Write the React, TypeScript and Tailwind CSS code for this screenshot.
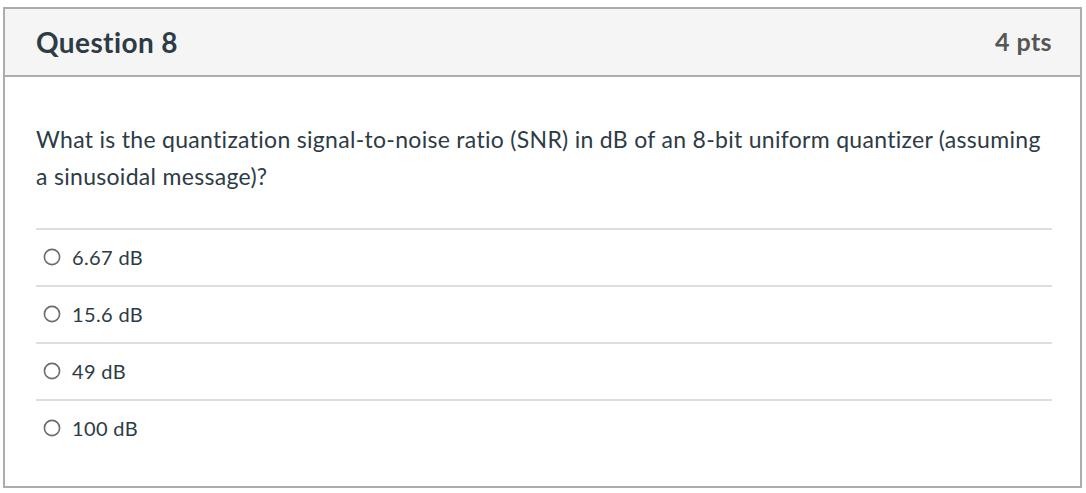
const ANSWERS = ["6.67 dB", "15.6 dB", "49 dB", "100 dB"];

function Radio() {
  return (
    <svg width="18" height="18" viewBox="0 0 18 18" className="flex-none">
      <circle cx="9" cy="9" r="7.6" fill="white" stroke="#6b6b6b" strokeWidth="1.6" />
    </svg>
  );
}

export default function App() {
  return (
    <div
      className="h-[493px] w-[1086px] bg-white pl-[3px] pt-[7px] [font-variant-ligatures:none]"
      style={{ fontFamily: "Lato, 'Open Sans', sans-serif" }}
    >
      <div className="flex h-[481px] w-[1079px] flex-col border-2 border-[#acacac]">
        {/* header */}
        <div className="flex h-[68px] flex-none items-center justify-between border-b-2 border-[#acacac] bg-[#f5f5f5] pl-[31px] pr-[28px]">
          <span className="text-[28px] font-bold tracking-[0.4px] text-[#2d3b45]">Question 8</span>
          <span className="text-[25px] font-bold tracking-[0.4px] text-[#565656]">4 pts</span>
        </div>

        {/* body */}
        <div className="px-[31px] pr-[28px] pt-[44px]">
          <p className="text-[23px] leading-[37px] tracking-[0.3px] text-[#2d3b45]">
            What is the quantization signal-to-noise ratio (SNR) in dB of an 8-bit uniform quantizer (assuming a
            sinusoidal message)?
          </p>
          <div className="mt-[33px]">
            {ANSWERS.map((a) => (
              <div
                key={a}
                className="flex h-[57px] items-center gap-[11px] border-t-2 border-[#dedede] pb-[2px] pl-[7px]"
              >
                <Radio />
                <span className="text-[20px] tracking-[0.35px] text-[#2d3b45]">{a}</span>
              </div>
            ))}
          </div>
        </div>
      </div>
    </div>
  );
}
